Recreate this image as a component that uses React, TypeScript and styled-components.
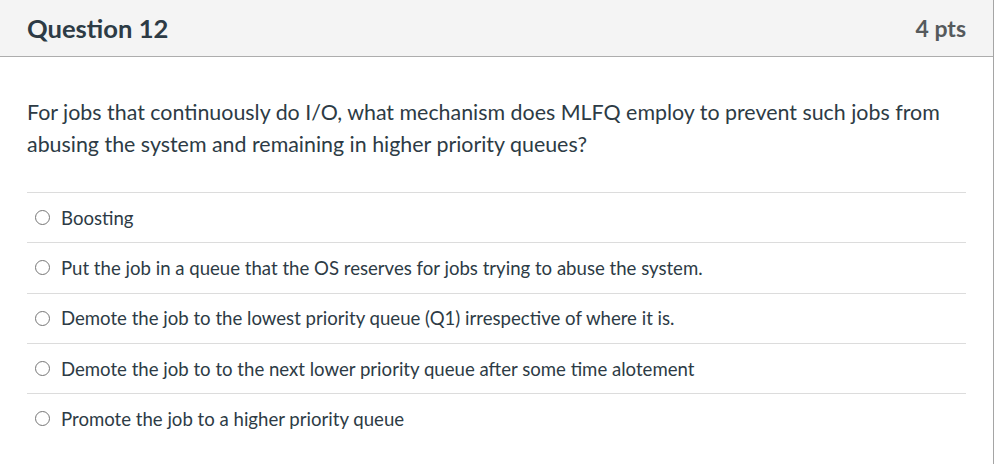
import React from "react";
import styled, { createGlobalStyle } from "styled-components";

const GlobalStyle = createGlobalStyle`
  body {
    margin: 0;
    background: #fff;
    font-family: Lato, "Open Sans", sans-serif;
    color: #2d3b45;
  }
`;

const Card = styled.div`
  width: 993px;
  height: 464px;
  border-right: 1px solid #a5a5a5;
  box-sizing: content-box;
`;

const Header = styled.div`
  height: 57px;
  background: #f4f4f4;
  border-bottom: 1px solid #adadad;
  display: flex;
  align-items: center;
  justify-content: space-between;
  padding: 0 27px;
  box-sizing: border-box;
`;

const Title = styled.h2`
  margin: 0;
  font-size: 25.6px;
  font-weight: 700;
  color: #2d3b45;
`;

const Points = styled.span`
  font-size: 23px;
  font-weight: 700;
  color: #565a5c;
`;

const Body = styled.div`
  padding: 39px 27px 0;
`;

const Prompt = styled.p`
  margin: 0 0 32px;
  font-size: 21.4px;
  line-height: 32px;
`;

const Answers = styled.div`
  border-top: 1px solid #dcdcdc;
`;

const Answer = styled.label<{ $last?: boolean }>`
  display: flex;
  align-items: center;
  gap: 11px;
  height: 49.3px;
  padding-left: 8px;
  border-bottom: ${(p) => (p.$last ? "none" : "1px solid #dcdcdc")};
  font-size: 18.6px;
  color: #2d3b45;
`;

const Radio = styled.span`
  width: 13px;
  height: 13px;
  border: 1px solid #767676;
  border-radius: 50%;
  flex: none;
`;

const options = [
  "Boosting",
  "Put the job in a queue that the OS reserves for jobs trying to abuse the system.",
  "Demote the job to the lowest priority queue (Q1) irrespective of where it is.",
  "Demote the job to to the next lower priority queue after some time alotement",
  "Promote the job to a higher priority queue",
];

export default function App() {
  return (
    <>
      <GlobalStyle />
      <Card>
        <Header>
          <Title>Question 12</Title>
          <Points>4 pts</Points>
        </Header>
        <Body>
          <Prompt>
            For jobs that continuously do I/O, what mechanism does MLFQ employ to prevent such jobs from
            abusing the system and remaining in higher priority queues?
          </Prompt>
          <Answers>
            {options.map((o, i) => (
              <Answer key={i} $last={i === options.length - 1}>
                <Radio />
                {o}
              </Answer>
            ))}
          </Answers>
        </Body>
      </Card>
    </>
  );
}
